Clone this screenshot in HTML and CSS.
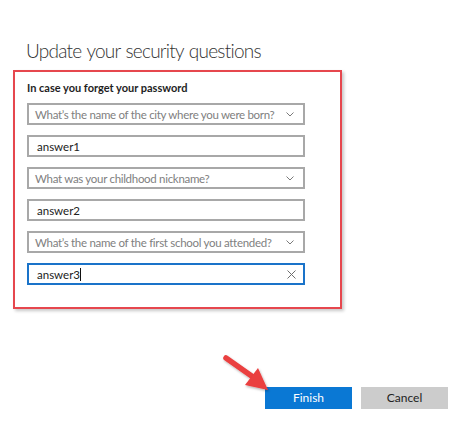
FILE: index.html
```html
<!DOCTYPE html>
<html>
<head>
<meta charset="utf-8">
<link rel="stylesheet" href="styles.css">
</head>
<body>
<div class="page">
  <h1 class="title">Update your security questions</h1>
  <div class="card">
    <div class="card-head">In case you forget your password</div>
    <div class="field select"><span class="ph">What’s the name of the city where you were born?</span><svg class="chev" width="8" height="5" viewBox="0 0 8 5"><path d="M0.5 0.5 L4 4 L7.5 0.5" fill="none" stroke="#7a7a7a" stroke-width="1"/></svg></div>
    <div class="field"><span class="val">answer1</span></div>
    <div class="field select"><span class="ph">What was your childhood nickname?</span><svg class="chev" width="8" height="5" viewBox="0 0 8 5"><path d="M0.5 0.5 L4 4 L7.5 0.5" fill="none" stroke="#7a7a7a" stroke-width="1"/></svg></div>
    <div class="field"><span class="val">answer2</span></div>
    <div class="field select"><span class="ph">What’s the name of the first school you attended?</span><svg class="chev" width="8" height="5" viewBox="0 0 8 5"><path d="M0.5 0.5 L4 4 L7.5 0.5" fill="none" stroke="#7a7a7a" stroke-width="1"/></svg></div>
    <div class="field active"><span class="val">answer3</span><span class="caret"></span><svg class="clear" width="9" height="9" viewBox="0 0 9 9"><path d="M0.5 0.5 L8.5 8.5 M8.5 0.5 L0.5 8.5" stroke="#6e6e6e" stroke-width="1"/></svg></div>
  </div>
  <div class="actions">
    <button class="btn primary">Finish</button>
    <button class="btn secondary">Cancel</button>
  </div>
  <svg class="arrow" width="60" height="50" viewBox="0 0 60 50">
    <defs><filter id="sh" x="-20%" y="-20%" width="150%" height="150%"><feDropShadow dx="1" dy="1.5" stdDeviation="1" flood-color="#000" flood-opacity="0.3"/></filter></defs>
    <g filter="url(#sh)">
      <line x1="11" y1="13" x2="38" y2="32" stroke="#ea3f3f" stroke-width="5.5" stroke-linecap="round"/>
      <polygon points="53,45 30,40 43,23" fill="#ea3f3f"/>
    </g>
  </svg>
</div>
</body>
</html>
```
FILE: styles.css
```css
html, body {
  margin: 0;
  padding: 0;
  background: #ffffff;
}
.page {
  position: relative;
  width: 474px;
  height: 436px;
  font-family: Lato, "Noto Sans", sans-serif;
  color: #222;
  overflow: hidden;
}
.title {
  margin: 0;
  padding: 38px 0 0 26px;
  font-family: Lato, "Open Sans", sans-serif;
  font-weight: 300;
  font-size: 19px;
  letter-spacing: -0.75px;
  word-spacing: 1px;
  line-height: 26px;
  color: #333;
}
.card {
  margin: 6px 0 0 13px;
  width: 313px;
  height: 235px;
  border: 2px solid #e6474e;
  box-shadow: 2px 2px 3px rgba(0, 0, 0, 0.22);
  padding: 0 0 0 12px;
  box-sizing: content-box;
  display: flex;
  flex-direction: column;
  gap: 10px;
}
.card-head {
  font-size: 11px;
  font-weight: 700;
  line-height: 14px;
  margin-top: 9px;
  margin-bottom: -2px;
  color: #1e1e1e;
}
.field {
  width: 278px;
  height: 22px;
  box-sizing: border-box;
  border: 2px solid #a8a8a8;
  display: flex;
  align-items: center;
  padding: 0 6px 0 6px;
  font-size: 11.5px;
  letter-spacing: -0.3px;
  background: #fff;
}
.field .ph {
  color: #808080;
  flex: 1;
  white-space: nowrap;
}
.field .val {
  color: #222;
  padding-left: 2px;
  letter-spacing: 0;
}
.field.active {
  border-color: #1a73c9;
}
.caret {
  width: 1px;
  height: 13px;
  background: #111;
}
.chev {
  margin-right: 3px;
}
.clear {
  margin-left: auto;
  margin-right: 1px;
}
.actions {
  display: flex;
  gap: 9px;
  margin: 78px 0 0 265px;
}
.btn {
  width: 87px;
  height: 22px;
  border: 0;
  padding: 0;
  font-family: Lato, "Noto Sans", sans-serif;
  font-size: 12px;
  line-height: 22px;
}
.btn.primary {
  background: #0a78d4;
  color: #fff;
}
.btn.secondary {
  background: #cccccc;
  color: #222;
}
.arrow {
  position: absolute;
  left: 215px;
  top: 345px;
}
```
